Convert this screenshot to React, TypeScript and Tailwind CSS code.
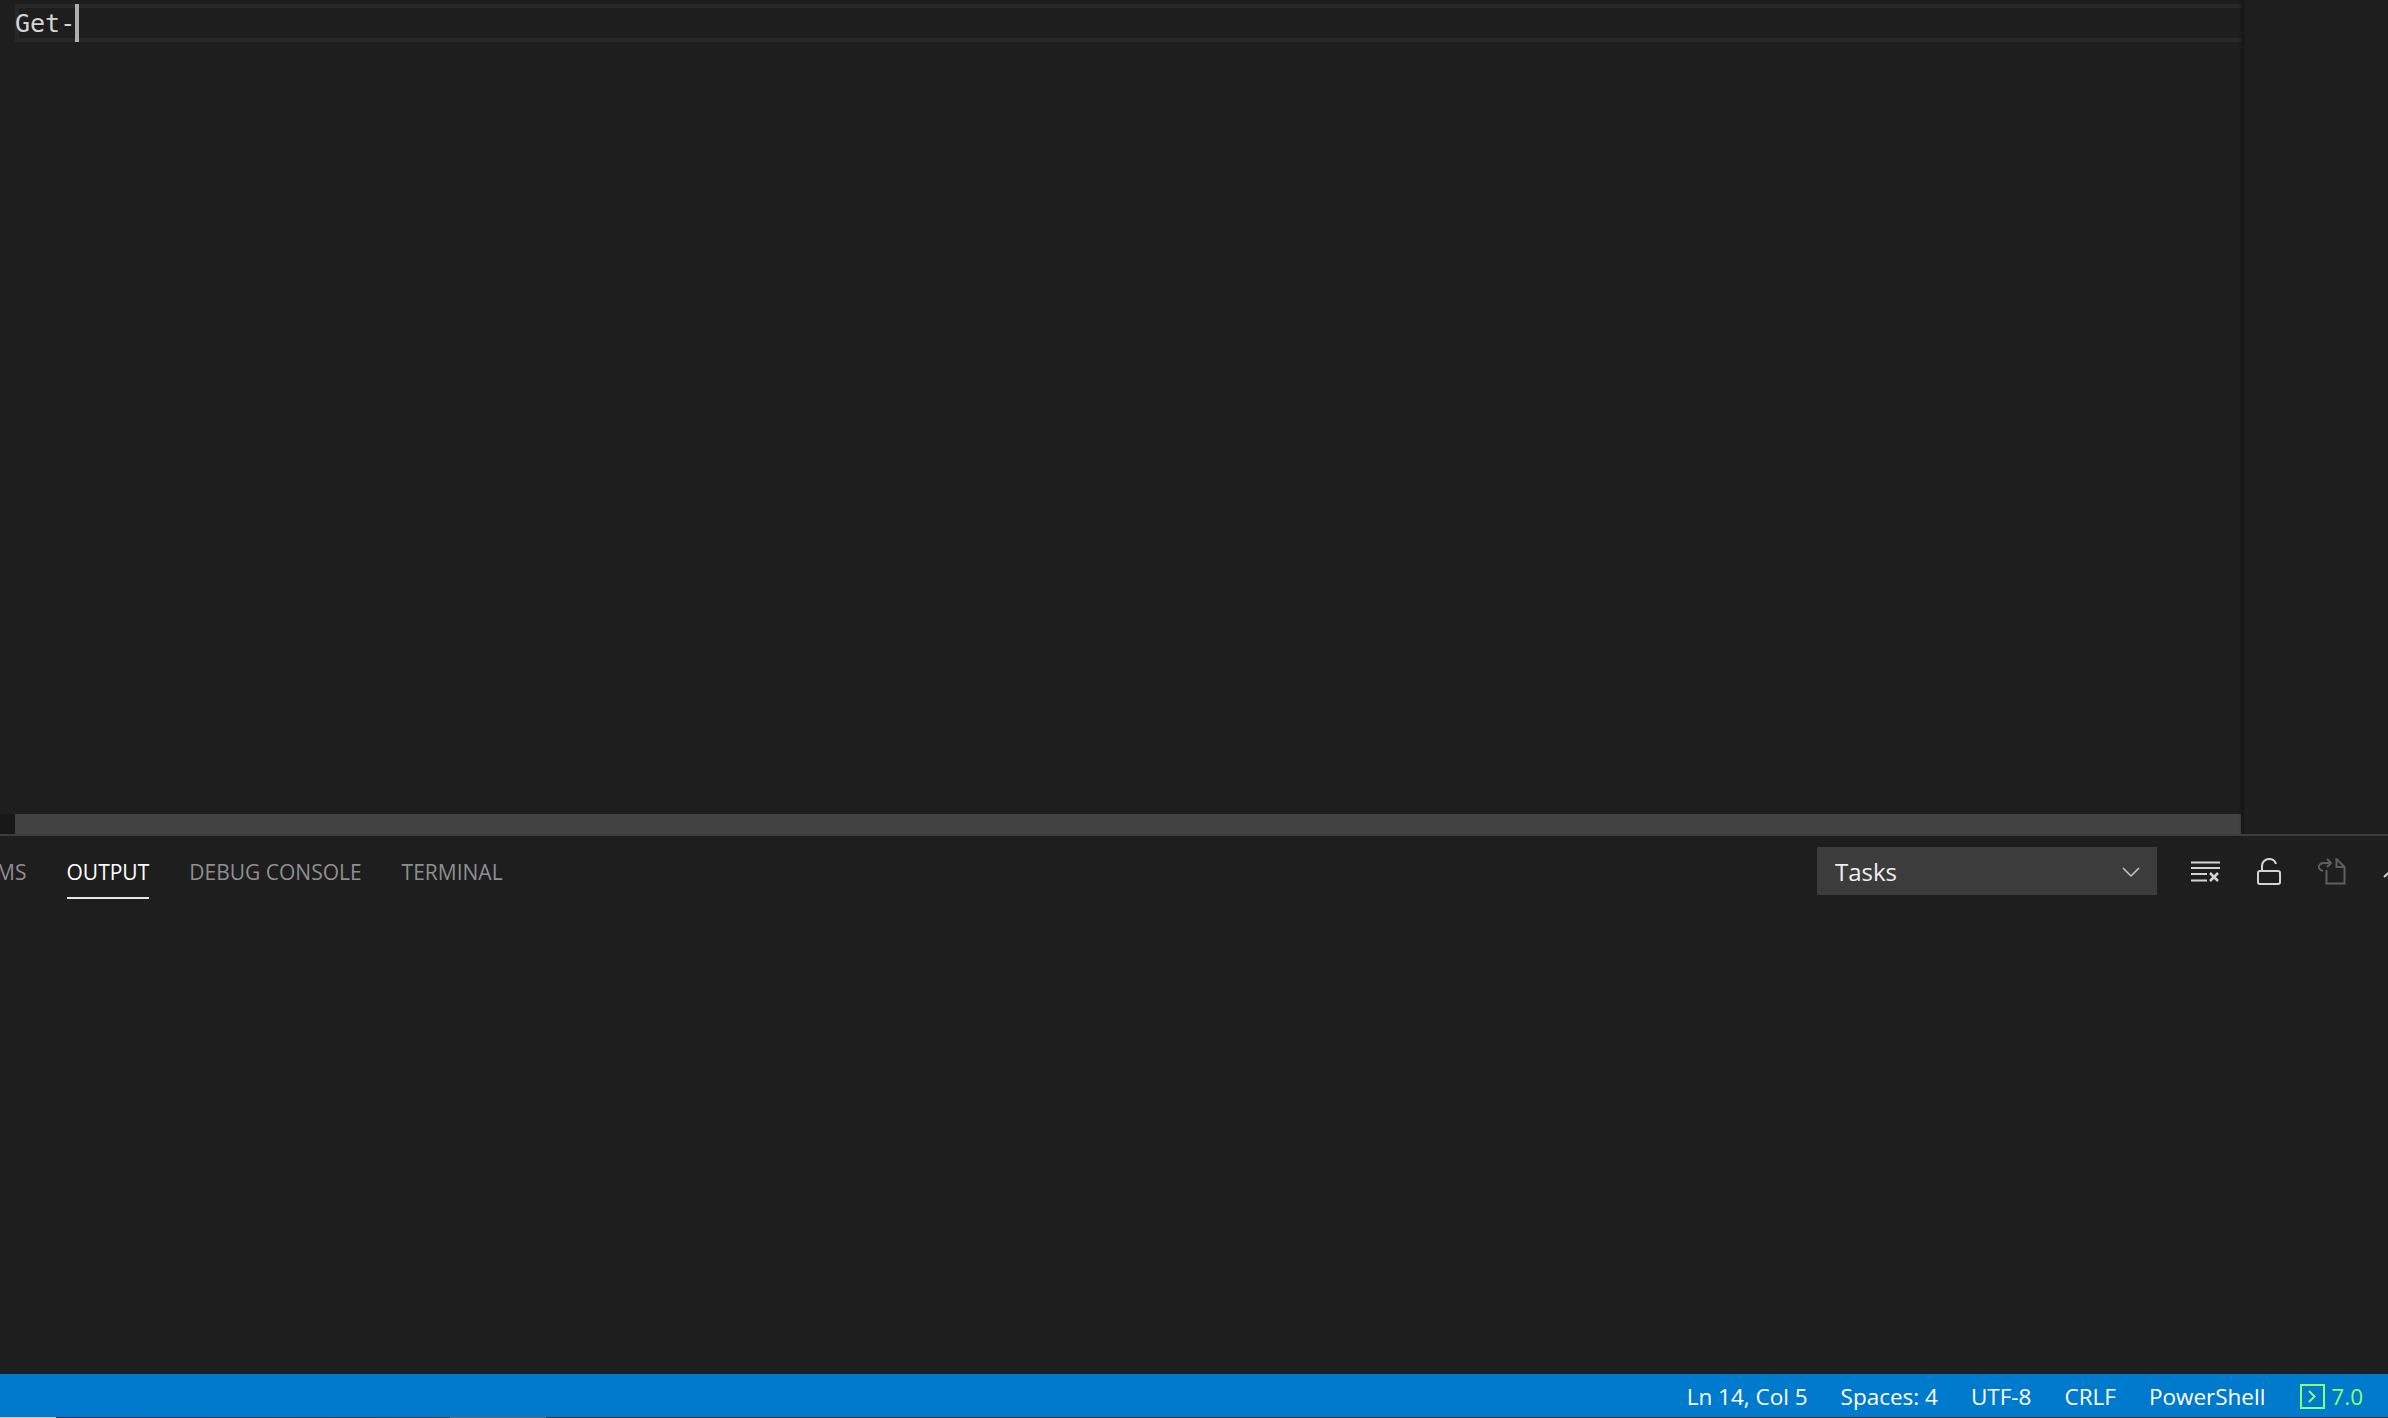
const uiFont = { fontFamily: '"Open Sans", "Noto Sans", sans-serif' };

function ClearIcon() {
  return (
    <svg width="29" height="21" viewBox="0 0 29 21" fill="none" stroke="#d4d4d4" strokeWidth="2" className="shrink-0">
      <path d="M0 1.5h29M0 7h29M0 13h16M0 19.5h16" />
      <path d="M19 12l8 8M27 12l-8 8" strokeWidth="2.5" />
    </svg>
  );
}

function LockIcon() {
  return (
    <svg width="24" height="27" viewBox="0 0 24 27" fill="none" stroke="#d4d4d4" strokeWidth="2" className="shrink-0">
      <rect x="1" y="13" width="22" height="13" rx="2" />
      <path d="M5 13V8a7 7 0 0 1 7-7c3 0 6 1 7 5" />
    </svg>
  );
}

function OpenFileIcon() {
  return (
    <svg width="28" height="27" viewBox="0 0 28 27" fill="none" stroke="#5f5f5f" strokeWidth="2" className="shrink-0">
      <path d="M8.5 12v13.5h18V9l-8-8h-1" />
      <path d="M18.5 1v8h8" />
      <path d="M5 13C1 12 0 9 1.500 7c1-1.500 2-2 4-2H13M9 1l4 4-4 4" />
    </svg>
  );
}

function ChevronUpIcon() {
  return (
    <svg width="26" height="16" viewBox="0 0 26 16" fill="none" stroke="#d4d4d4" strokeWidth="2" className="shrink-0">
      <path d="M1 14L13 3l12 11" />
    </svg>
  );
}

export default function App() {
  return (
    <div className="flex h-[1418px] w-[2388px] flex-col overflow-hidden bg-[#1e1e1e]" style={uiFont}>
      {/* Editor */}
      <div className="flex h-[834px] shrink-0">
        <div className="flex w-[2244px] shrink-0 flex-col">
          <div className="mt-1 ml-[15px] flex h-[38px] items-center border-y-4 border-l-4 border-[#282828]">
            <span className="-ml-1 text-[25px] leading-none text-[#d4d4d4]" style={{ fontFamily: '"DejaVu Sans Mono", monospace' }}>
              Get-
            </span>
            <span className="h-[38px] w-1 shrink-0 bg-[#aeafad]" />
          </div>
          <div className="mt-auto flex h-5 pr-[3px]">
            <div className="w-[15px] bg-[#171717]" />
            <div className="flex-1 bg-[#424242]" />
          </div>
        </div>
        <div className="relative z-10 flex-1 shadow-[-2px_0_3px_#141414]" />
      </div>

      {/* Panel */}
      <div className="relative z-20 flex min-h-0 flex-1 flex-col border-t-2 border-[#3c3c3c] bg-[#1e1e1e]">
        <div className="flex h-[70px] items-center overflow-hidden">
          <div className="flex min-w-0 flex-1 items-center gap-10 pt-[3px] text-[21px] text-[#8f8f8f]">
            <span className="-ml-[82px]">PROBLEMS</span>
            <span className="relative text-white">
              OUTPUT
              <span className="absolute -bottom-[11px] left-0 h-0.5 w-full bg-[#e7e7e7]" />
            </span>
            <span>DEBUG CONSOLE</span>
            <span>TERMINAL</span>
          </div>
          <div className="flex w-[571px] shrink-0 items-center overflow-hidden">
            <div className="flex h-12 w-[340px] shrink-0 items-center justify-between bg-[#3c3c3c] pt-[2px] pr-4 pl-[18px] text-[24px] text-[#f0f0f0]">
              Tasks
              <svg width="20" height="12" viewBox="0 0 20 12" fill="none" stroke="#c8c8c8" strokeWidth="1.500">
                <path d="M2 2l8 8 8-8" />
              </svg>
            </div>
            <div className="ml-[34px] flex items-center gap-[37px]">
              <ClearIcon />
              <LockIcon />
              <OpenFileIcon />
              <ChevronUpIcon />
            </div>
          </div>
        </div>
      </div>

      {/* Status bar */}
      <div className="flex h-[43px] shrink-0 items-center justify-end gap-[33px] bg-[#007acc] pt-[2px] pr-[25px] text-[22.5px] text-white">
        <span>Ln 14, Col 5</span>
        <span>Spaces: 4</span>
        <span>UTF-8</span>
        <span>CRLF</span>
        <span>PowerShell</span>
        <span className="ml-[2px] flex items-center gap-[6px] text-[#89ff70]">
          <svg width="25" height="25" viewBox="0 0 25 25" fill="none" stroke="#89ff70" strokeWidth="2">
            <rect x="1" y="1" width="23" height="23" />
            <path d="M9 7l5.500 5.500L9 18" />
          </svg>
          7.0
        </span>
      </div>
      <div className="flex h-px shrink-0 bg-[#333333]">
        <div className="w-14 bg-[#c4c4c4]" />
        <div className="w-[394px] bg-gradient-to-r from-[#2a3350] to-[#404040]" />
        <div className="w-24 bg-[#6a6a6a]" />
      </div>
    </div>
  );
}
